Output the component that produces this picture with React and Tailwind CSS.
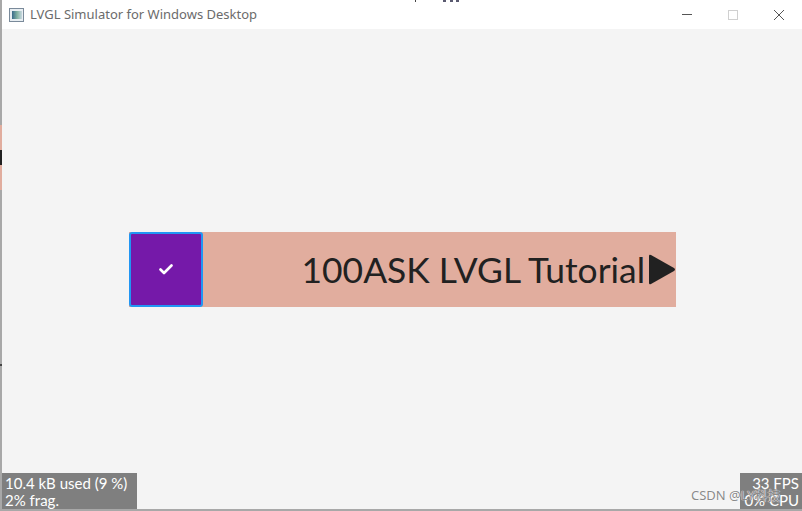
import React from "react";

function TitleBar() {
  return (
    <div className="flex h-[29px] items-center bg-white pl-[7px]">
      {/* app icon */}
      <div className="flex h-[14px] w-[15px] items-center justify-center border border-[#7a8a9a] bg-[#e8eef2]">
        <div className="h-[8px] w-[10px] bg-gradient-to-r from-[#3a6a8a] via-[#7fb0a0] to-[#c8d8e0]" />
      </div>
      <span className="ml-[6px] text-[13px] text-[#6b6b6b] [font-family:'Noto_Sans','Open_Sans',sans-serif]">
        LVGL Simulator for Windows Desktop
      </span>
      <div className="ml-auto flex h-full items-center">
        <div className="flex w-[46px] justify-center">
          <div className="h-px w-[10px] bg-[#555]" />
        </div>
        <div className="flex w-[46px] justify-center">
          <div className="h-[10px] w-[10px] border border-[#d0d0d0]" />
        </div>
        <div className="flex w-[46px] justify-center">
          <svg width="12" height="12" viewBox="0 0 12 12">
            <path d="M1 1L11 11M11 1L1 11" stroke="#555" strokeWidth="1" />
          </svg>
        </div>
      </div>
    </div>
  );
}

export default function App() {
  return (
    <div className="relative h-[511px] w-[802px] overflow-hidden bg-white [font-family:'Lato',sans-serif]">
      <div className="flex h-[511px] flex-col border-l-2 border-b-2 border-[#a8a8a8]">
        <TitleBar />
        <div className="flex flex-1 flex-col bg-[#f4f4f4]">
          <div className="flex flex-1 items-start pl-[127px] pt-[203px]">
            <div className="flex h-[75px] w-[547px] items-center bg-[#e1ad9e]">
              <div className="flex h-[75px] w-[74px] items-center justify-center rounded-[3px] border-2 border-[#2196f3] bg-[#7519a9]">
                <svg width="14" height="11" viewBox="0 0 14 11">
                  <path d="M1.5 5.5L5 9L12.5 1.5" stroke="white" strokeWidth="2.6" fill="none" strokeLinecap="round" strokeLinejoin="round" />
                </svg>
              </div>
              <div className="flex flex-1 items-center justify-end">
                <span className="text-[35.4px] leading-none text-[#212121] [font-family:'Lato',sans-serif]">
                  100ASK LVGL Tutorial
                </span>
                <svg width="30" height="33" viewBox="0 0 30 33" className="ml-[1px]">
                  <path d="M3 3 Q3 1 5 2 L28 15 Q30 16.5 28 18 L5 31 Q3 32 3 30 Z" fill="#212121" />
                </svg>
              </div>
            </div>
          </div>
          <div className="flex items-end justify-between">
            <div className="flex w-[135px] flex-col bg-[#7f7f7f] pl-[3px] pt-[2px] text-[15px] leading-[17px] text-white">
              <span>10.4 kB used (9 %)</span>
              <span>2% frag.</span>
            </div>
            <div className="flex w-[62px] flex-col items-end bg-[#7f7f7f] pr-[3px] pt-[2px] text-[15px] leading-[17px] text-white">
              <span>33 FPS</span>
              <span>0% CPU</span>
            </div>
          </div>
        </div>
      </div>

      {/* leftover redraw marks on the window edge */}
      <div className="absolute left-0 top-[125px] h-[65px] w-[2px] bg-[#e1ad9e]" />
      <div className="absolute left-0 top-[150px] h-[15px] w-[2px] bg-[#212121]" />
      <div className="absolute left-0 top-[364px] h-[2px] w-[2px] bg-[#444]" />
      <div className="absolute left-[415px] top-0 h-[2px] w-[1px] bg-[#444]" />
      <div className="absolute left-[443px] top-0 h-[2px] w-[3px] bg-[#5a5a70]" />
      <div className="absolute left-[450px] top-0 h-[2px] w-[3px] bg-[#5a5a70]" />
      <div className="absolute left-[456px] top-0 h-[2px] w-[3px] bg-[#5a5a70]" />

      {/* watermark overlay */}
      <span className="absolute left-[691px] top-[487px] whitespace-nowrap text-[13px] leading-[16px] text-[#8a8a8a] [text-shadow:0_0_1px_#fff,0_0_1px_#fff] [font-family:'Noto_Sans','Noto_Sans_CJK_SC',sans-serif]">
        CSDN @LY科技
      </span>
    </div>
  );
}
